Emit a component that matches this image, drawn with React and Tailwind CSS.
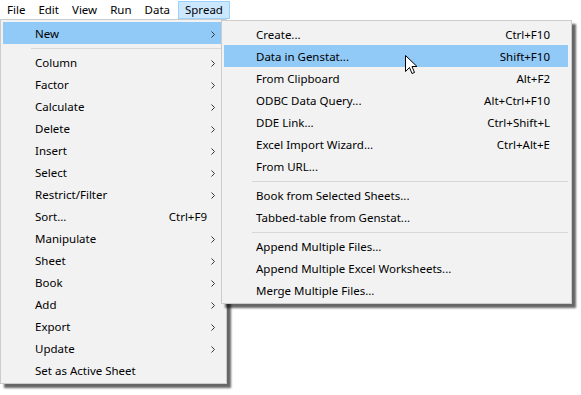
import React from 'react';

const font = { fontFamily: '"Noto Sans", "Open Sans", sans-serif' };

const mainItems = [
  { label: 'Column', sub: true },
  { label: 'Factor', sub: true },
  { label: 'Calculate', sub: true },
  { label: 'Delete', sub: true },
  { label: 'Insert', sub: true },
  { label: 'Select', sub: true },
  { label: 'Restrict/Filter', sub: true },
  { label: 'Sort...', shortcut: 'Ctrl+F9' },
  { label: 'Manipulate', sub: true },
  { label: 'Sheet', sub: true },
  { label: 'Book', sub: true },
  { label: 'Add', sub: true },
  { label: 'Export', sub: true },
  { label: 'Update', sub: true },
  { label: 'Set as Active Sheet' },
];

const newGroups = [
  [
    { label: 'Create...', shortcut: 'Ctrl+F10' },
    { label: 'Data in Genstat...', shortcut: 'Shift+F10', active: true },
    { label: 'From Clipboard', shortcut: 'Alt+F2' },
    { label: 'ODBC Data Query...', shortcut: 'Alt+Ctrl+F10' },
    { label: 'DDE Link...', shortcut: 'Ctrl+Shift+L' },
    { label: 'Excel Import Wizard...', shortcut: 'Ctrl+Alt+E' },
    { label: 'From URL...' },
  ],
  [
    { label: 'Book from Selected Sheets...' },
    { label: 'Tabbed-table from Genstat...' },
  ],
  [
    { label: 'Append Multiple Files...' },
    { label: 'Append Multiple Excel Worksheets...' },
    { label: 'Merge Multiple Files...' },
  ],
];

function Chevron() {
  return (
    <svg width="4" height="7" viewBox="0 0 4 7" className="block">
      <path d="M0.5 0.5 L3.5 3.5 L0.5 6.5" fill="none" stroke="#333" strokeWidth="1" />
    </svg>
  );
}

function MainRow({ item, active }) {
  return (
    <div className={`flex items-center h-[22px] pt-[2px] pl-[32px] pr-[9px] ${active ? 'bg-[#91c9f7]' : ''}`}>
      <span className="flex-1">{item.label}</span>
      {item.shortcut && <span className="mr-[4px]">{item.shortcut}</span>}
      <span className="w-[4px] flex items-center">{item.sub && <Chevron />}</span>
    </div>
  );
}

function Separator() {
  return <div className="h-[7px] pt-[4px] ml-[28px]"><div className="h-px bg-[#d7d7d7]" /></div>;
}

function Cursor() {
  return (
    <svg width="13" height="21" viewBox="0 0 13 21" className="absolute left-[405px] top-[55px]">
      <path
        d="M0.5 0.5 L0.5 16.5 L4.5 12.5 L7 18.5 L9.5 17.5 L7 11.5 L12 11.5 Z"
        fill="#fff"
        stroke="#000"
        strokeWidth="1"
        strokeLinejoin="miter"
      />
    </svg>
  );
}

export default function App() {
  return (
    <div className="relative w-[581px] h-[395px] bg-white text-[11.5px] text-black overflow-hidden" style={font}>
      {/* menu bar */}
      <div className="flex items-center h-[19px] pl-[1px]">
        {['File', 'Edit', 'View', 'Run', 'Data'].map((m) => (
          <div key={m} className="px-[6px] h-[18px] flex items-center mt-[1px] mr-[1px]">{m}</div>
        ))}
        <div className="px-[6px] h-[18px] mt-[1px] ml-[1px] flex items-center bg-[#cce8ff] border border-[#99d1ff]">Spread</div>
      </div>

      {/* Spread menu */}
      <div className="absolute left-0 top-[19px] w-[227px] bg-[#f2f2f2] border border-[#cccccc] p-[2px] shadow-[4px_4px_2px_rgba(0,0,0,0.6)]">
        <MainRow item={{ label: 'New', sub: true }} active />
        <Separator />
        {mainItems.map((it) => (
          <MainRow key={it.label} item={it} />
        ))}
      </div>

      {/* New submenu */}
      <div className="absolute left-[221px] top-[20px] w-[351px] bg-[#f2f2f2] border border-[#cccccc] py-[2px] pl-[2px] pr-[3px] shadow-[4px_4px_2px_rgba(0,0,0,0.6)]">
        {newGroups.map((group, gi) => (
          <div key={gi}>
            {gi > 0 && <Separator />}
            {group.map((it) => (
              <div
                key={it.label}
                className={`flex items-center h-[22px] pt-[2px] pl-[32px] pr-[18px] ${it.active ? 'bg-[#91c9f7]' : ''}`}
              >
                <span className="flex-1">{it.label}</span>
                {it.shortcut && <span>{it.shortcut}</span>}
              </div>
            ))}
          </div>
        ))}
      </div>

      <Cursor />
    </div>
  );
}
